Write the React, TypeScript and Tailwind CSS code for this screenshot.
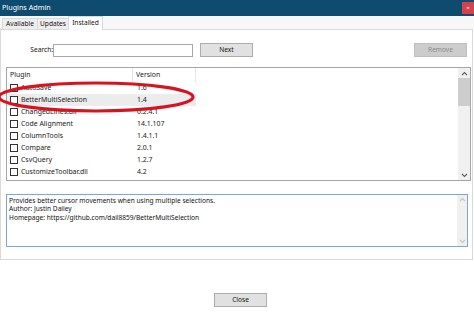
import React from "react";

interface Plugin {
  name: string;
  version: string;
}

const plugins: Plugin[] = [
  { name: "AutoSave", version: "1.6" },
  { name: "BetterMultiSelection", version: "1.4" },
  { name: "ChangedLines.dll", version: "0.2.4.1" },
  { name: "Code Alignment", version: "14.1.107" },
  { name: "ColumnTools", version: "1.4.1.1" },
  { name: "Compare", version: "2.0.1" },
  { name: "CsvQuery", version: "1.2.7" },
  { name: "CustomizeToolbar.dll", version: "4.2" },
];

const Chevron = ({ up, faded }: { up?: boolean; faded?: boolean }) => (
  <svg width="7" height="5" viewBox="0 0 7 5">
    <polyline
      points={up ? "1,4 3.5,1.5 6,4" : "1,1 3.5,3.5 6,1"}
      fill="none"
      stroke={faded ? "#c4c4c4" : "#606060"}
      strokeWidth="1.1"
    />
  </svg>
);

const App: React.FC = () => {
  return (
    <div
      className="relative w-[474px] h-[324px] bg-white overflow-hidden text-[#111] text-[6.6px]"
      style={{ fontFamily: '"Noto Sans", "Open Sans", sans-serif' }}
    >
      {/* ============= title bar ============= */}
      <div className="h-[16px] bg-[#0e4b6f] flex items-center justify-between pl-[2px]">
        <span className="text-white text-[7.2px] leading-none">Plugins Admin</span>
        <div className="w-[12px] h-[12px] bg-[#d4424e] flex items-center justify-center text-white text-[6px] leading-none">
          ×
        </div>
      </div>

      {/* ============= tabs ============= */}
      <div className="h-[13px] flex items-end pl-[2px] bg-[#f7f7f7]">
        <div className="h-[11px] w-[35px] bg-[#eeeeee] border-l border-t border-[#d9d9d9] flex items-center justify-center leading-none">
          Available
        </div>
        <div className="h-[11px] w-[31px] bg-[#eeeeee] border-l border-t border-[#d9d9d9] flex items-center justify-center leading-none">
          Updates
        </div>
        <div className="h-[14px] w-[35px] bg-white border-l border-r border-t border-[#d9d9d9] flex items-center justify-center leading-none relative top-[1px] z-10">
          Installed
        </div>
      </div>

      {/* ============= panel ============= */}
      <div className="w-[473px] h-[231px] border border-[#dadada] bg-white flex flex-col">
        {/* search row */}
        <div className="mt-[13px] h-[14px] flex items-center">
          <span className="w-[52px] text-right leading-none">Search:</span>
          <div className="w-[140px] h-[13px] border border-[#a8a8a8] bg-white" />
          <button className="ml-[7px] w-[53px] h-[14px] bg-[#e1e1e1] border border-[#adadad] leading-none">
            Next
          </button>
          <div className="flex-1" />
          <button className="mr-[5px] w-[53px] h-[14px] bg-[#cccccc] border border-[#bfbfbf] text-[#8c8c8c] leading-none">
            Remove
          </button>
        </div>

        {/* plugin list */}
        <div className="mt-[10px] ml-[5px] w-[465px] h-[114px] border border-[#a5a5a5] flex overflow-hidden text-[6.9px] text-[#1a1a1a]">
          <div className="flex-1 flex flex-col overflow-hidden">
            <div className="h-[14px] flex shrink-0">
              <div className="w-[126px] border-r border-[#e5e5e5] pl-[3px] flex items-center leading-none">
                Plugin
              </div>
              <div className="w-[63px] border-r border-[#e5e5e5] pl-[3px] flex items-center leading-none">
                Version
              </div>
            </div>
            {plugins.map((p, i) => (
              <div
                key={p.name}
                className={`h-[12px] shrink-0 flex w-[189px] ${i === 1 ? "bg-[#ececec]" : ""}`}
              >
                <div className="w-[126px] pl-[3px] flex items-center gap-[3px] leading-none">
                  <div className="w-[8px] h-[8px] border border-[#333] bg-white shrink-0" />
                  <span>{p.name}</span>
                </div>
                <div className="w-[63px] pl-[4px] flex items-center leading-none">{p.version}</div>
              </div>
            ))}
            {/* next row, cut off by the list's edge */}
            <div className="h-[12px] shrink-0 pl-[3px] pt-[2px]">
              <div className="w-[8px] h-[8px] border border-[#333] bg-white" />
            </div>
          </div>
          <div className="w-[12px] bg-[#f0f0f0] flex flex-col items-center">
            <div className="h-[10px] flex items-center">
              <Chevron up />
            </div>
            <div className="w-[12px] h-[28px] bg-[#cdcdcd]" />
            <div className="flex-1" />
            <div className="h-[10px] flex items-center">
              <Chevron />
            </div>
          </div>
        </div>

        {/* description */}
        <div className="mt-[13px] ml-[5px] w-[462px] h-[53px] border border-[#7aa7d7] flex">
          <div className="flex-1 pl-[2px] pt-[2px] leading-[8.4px]">
            <div>Provides better cursor movements when using multiple selections.</div>
            <div>Author: Justin Dailey</div>
            <div>Homepage: https://github.com/dail8859/BetterMultiSelection</div>
          </div>
          <div className="w-[10px] bg-[#f0f0f0] flex flex-col items-center justify-between py-[2px]">
            <Chevron up faded />
            <Chevron faded />
          </div>
        </div>
      </div>

      {/* ============= close ============= */}
      <button className="mt-[33px] ml-[214px] w-[53px] h-[14px] bg-[#e1e1e1] border border-[#adadad] leading-none block">
        Close
      </button>

      {/* ============= red annotation ============= */}
      <svg className="absolute left-0 top-0 pointer-events-none" width="474" height="324">
        <ellipse cx="96" cy="97" rx="97" ry="14" fill="none" stroke="#d8131f" strokeWidth="3.2" />
      </svg>
    </div>
  );
};

export default App;
